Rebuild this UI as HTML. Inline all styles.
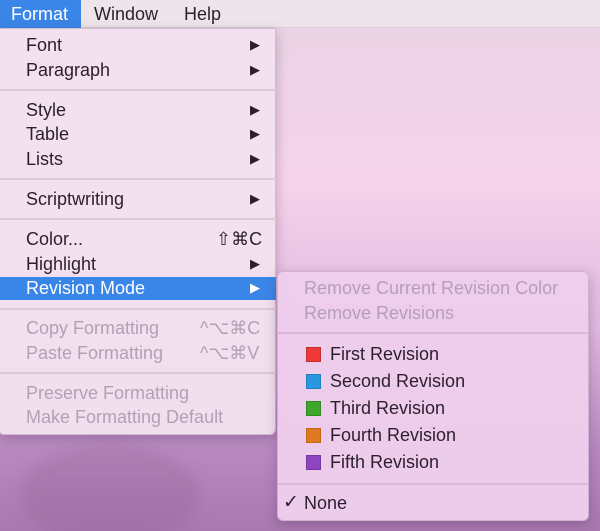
<!DOCTYPE html>
<html style="overflow:hidden;width:600px;height:531px"><head><meta charset="utf-8"><style>
*{margin:0;padding:0;box-sizing:border-box}
body{width:600px;height:531px;overflow:hidden;position:relative;font-family:"Liberation Sans","DejaVu Sans",sans-serif;font-size:18px;color:#2b1f2e;
background:linear-gradient(180deg,#e8d3e3 0%,#f5d3ea 35%,#e0b8e0 62%,#b889c0 85%,#a878b0 100%)}
.bar{position:absolute;left:0;top:0;width:600px;height:28px;background:#ede5ea;border-bottom:1px solid #d8ccd4}
.bar span{position:absolute;top:4px;font-size:18px}
.fmt{position:absolute;left:0;top:0;width:81px;height:28px;background:#3a86e8}
.menu{position:absolute;background:rgba(243,225,238,0.97);box-shadow:0 4px 12px rgba(80,40,80,.3);border:1px solid rgba(190,160,190,.6)}
.i{position:absolute;line-height:24px;white-space:nowrap}
.d{color:#b49fb6}
.sep{position:absolute;height:2px;background:#ddc8d8}
.ar{position:absolute;left:250px;font-size:13px;line-height:24px}
.sq{position:absolute;left:306px;width:15px;height:15px}
.tree{position:absolute;border-radius:50%;background:rgba(140,90,140,.25);filter:blur(6px)}
</style></head><body>
<div class="tree" style="left:20px;top:445px;width:180px;height:100px"></div>
<div class="bar"><div class="fmt"></div><span style="left:11px;color:#fff">Format</span><span style="left:94px">Window</span><span style="left:184px">Help</span></div>
<div class="menu" style="left:-2px;top:28px;width:278px;height:407px;border-radius:0 0 6px 6px"></div>
<div class="i" style="left:26px;top:33px">Font</div><div class="ar" style="top:33px">▶</div>
<div class="i" style="left:26px;top:58px">Paragraph</div><div class="ar" style="top:58px">▶</div>
<div class="sep" style="left:0;top:89px;width:276px"></div>
<div class="i" style="left:26px;top:98px">Style</div><div class="ar" style="top:98px">▶</div>
<div class="i" style="left:26px;top:122px">Table</div><div class="ar" style="top:122px">▶</div>
<div class="i" style="left:26px;top:147px">Lists</div><div class="ar" style="top:147px">▶</div>
<div class="sep" style="left:0;top:178px;width:276px"></div>
<div class="i" style="left:26px;top:187px">Scriptwriting</div><div class="ar" style="top:187px">▶</div>
<div class="sep" style="left:0;top:218px;width:276px"></div>
<div class="i" style="left:26px;top:227px">Color...</div><div class="i" style="left:216px;top:227px">⇧⌘C</div>
<div class="i" style="left:26px;top:252px">Highlight</div><div class="ar" style="top:252px">▶</div>
<div style="position:absolute;left:0;top:277px;width:276px;height:23px;background:#3a86e8"></div>
<div class="i" style="left:26px;top:276px;color:#fff">Revision Mode</div><div class="ar" style="top:276px;color:#fff">▶</div>
<div class="sep" style="left:0;top:308px;width:276px"></div>
<div class="i d" style="left:26px;top:316px">Copy Formatting</div><div class="i d" style="left:200px;top:316px">^⌥⌘C</div>
<div class="i d" style="left:26px;top:341px">Paste Formatting</div><div class="i d" style="left:200px;top:341px">^⌥⌘V</div>
<div class="sep" style="left:0;top:372px;width:276px"></div>
<div class="i d" style="left:26px;top:381px">Preserve Formatting</div>
<div class="i d" style="left:26px;top:405px">Make Formatting Default</div>

<div class="menu" style="left:277px;top:271px;width:312px;height:250px;border-radius:6px;background:rgba(238,205,236,0.97)"></div>
<div class="i d" style="left:304px;top:276px">Remove Current Revision Color</div>
<div class="i d" style="left:304px;top:301px">Remove Revisions</div>
<div class="sep" style="left:278px;top:332px;width:310px;background:#d8b8d6"></div>
<div class="sq" style="top:347px;background:#f03a3a;border:1px solid #c03030"></div><div class="i" style="left:330px;top:342px">First Revision</div>
<div class="sq" style="top:374px;background:#2a98e0;border:1px solid #2080c0"></div><div class="i" style="left:330px;top:369px">Second Revision</div>
<div class="sq" style="top:401px;background:#3fa52c;border:1px solid #308a20"></div><div class="i" style="left:330px;top:396px">Third Revision</div>
<div class="sq" style="top:428px;background:#e07a20;border:1px solid #c06818"></div><div class="i" style="left:330px;top:423px">Fourth Revision</div>
<div class="sq" style="top:455px;background:#8e45c0;border:1px solid #7538a0"></div><div class="i" style="left:330px;top:450px">Fifth Revision</div>
<div class="sep" style="left:278px;top:483px;width:310px;background:#d8b8d6"></div>
<div class="i" style="left:283px;top:491px;font-weight:bold;font-size:19px">✓</div><div class="i" style="left:304px;top:491px">None</div>
</body></html>
